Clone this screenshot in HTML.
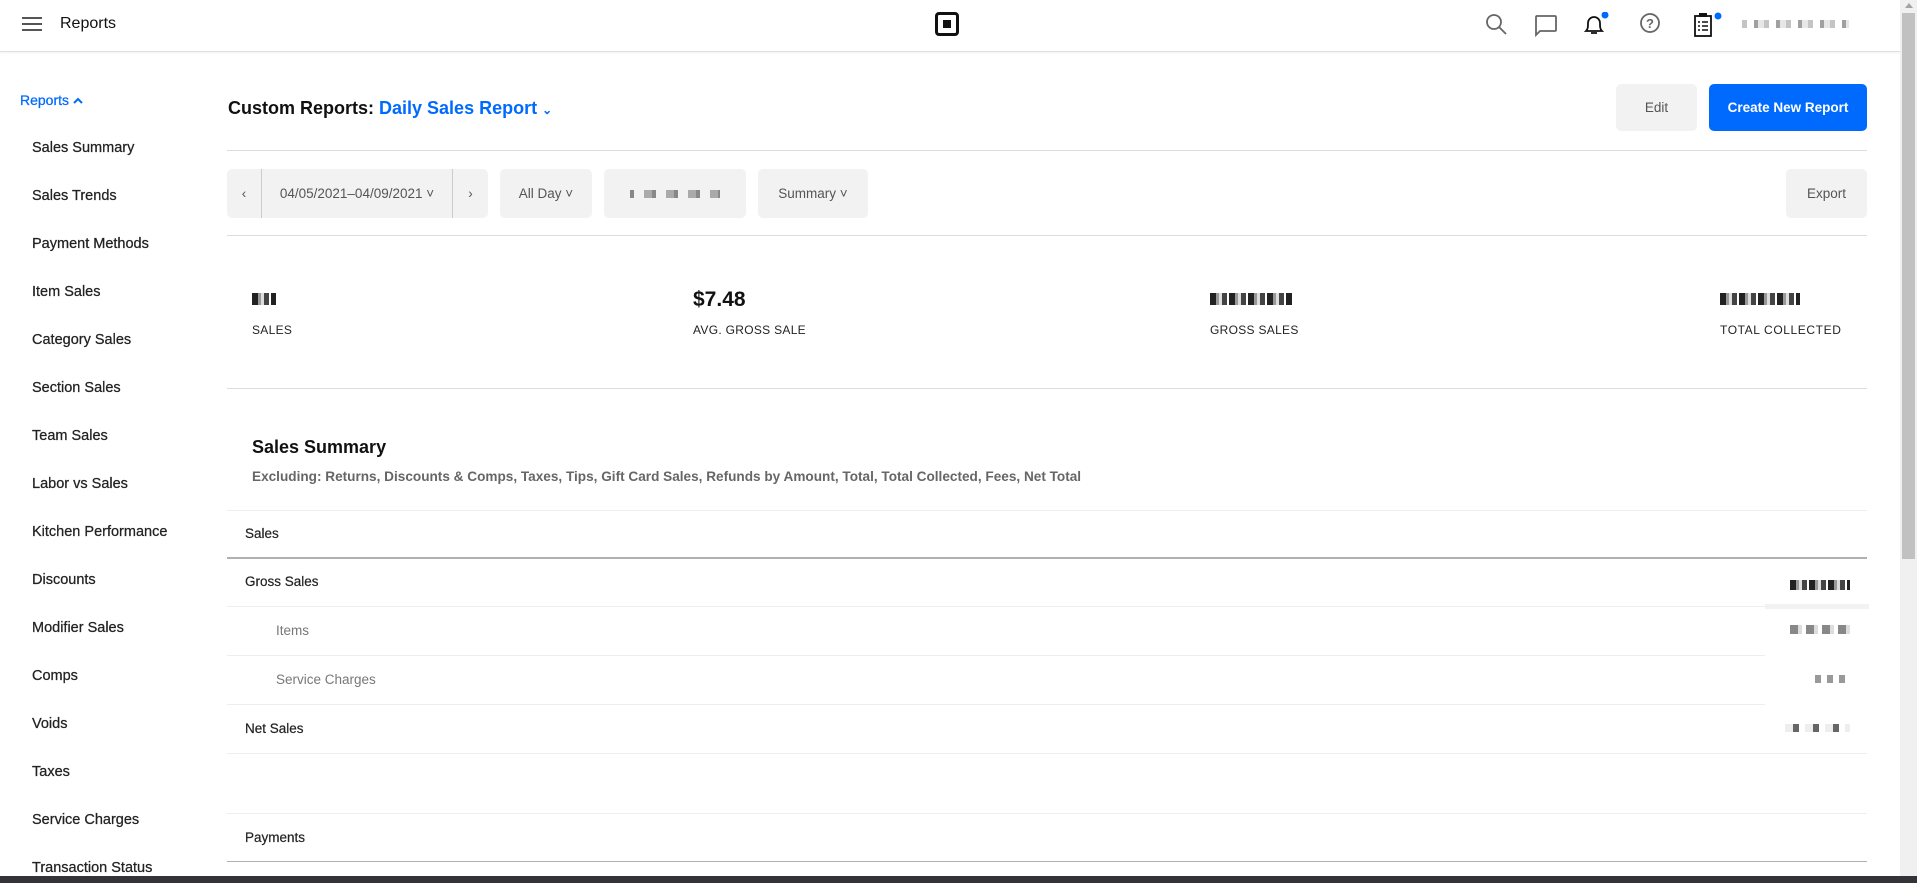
<!DOCTYPE html>
<html><head><meta charset="utf-8"><style>
*{box-sizing:border-box;margin:0;padding:0}
body{width:1917px;height:883px;overflow:hidden;background:#fff;font-family:"Liberation Sans",sans-serif;color:#1a1a1a;position:relative}
.abs{position:absolute}
.hdr{left:0;top:0;width:1900px;height:52px;border-bottom:1px solid #e0e0e0;box-shadow:0 1px 2px rgba(0,0,0,.06)}
.side{left:32px;font-size:14.5px;color:#222;-webkit-text-stroke:.25px #222}
.line{position:absolute;height:1px;background:#dcdcdc}
.btn{position:absolute;background:#f2f2f2;border-radius:5px;font-size:13.5px;color:#555;display:flex;align-items:center;justify-content:center}
.stv{font-size:21px;font-weight:bold;color:#111}
.stl{font-size:12px;color:#222;letter-spacing:.3px}
.blur{display:inline-block;height:12px;background:repeating-linear-gradient(90deg,#222 0 6px,#999 6px 9px,#ddd 9px 12px,#444 12px 17px,#fff 17px 19px)}
.rowt{position:absolute;font-size:13.5px;color:#222;-webkit-text-stroke:.2px #222}
.sub{color:#777;-webkit-text-stroke:0}
</style></head><body>
<div class="abs hdr"></div>
<div class="abs" style="left:22px;top:17px;width:20px;height:2px;background:#555;box-shadow:0 6px 0 #555,0 12px 0 #555"></div>
<div class="abs" style="left:60px;top:15px;font-size:16px;color:#111">Reports</div>
<div class="abs" style="left:935px;top:12px;width:24px;height:24px;border:3px solid #111;border-radius:4px;background:#fff"><div style="position:absolute;left:5px;top:5px;width:8px;height:8px;background:#111"></div></div>
<svg class="abs" style="left:1484px;top:12px" width="240" height="26" viewBox="0 0 240 26" fill="none" stroke-width="1.8">
<circle cx="10" cy="10" r="7" stroke="#666"/><line x1="15" y1="15" x2="22" y2="22" stroke="#666"/>
<path d="M52 4h19a1 1 0 0 1 1 1v13a1 1 0 0 1-1 1H56l-4 4V5a1 1 0 0 1 1-1z" stroke="#666"/>
<path d="M102 19c2-2 2-4 2-8a6 6 0 0 1 12 0c0 4 0 6 2 8zM107 21h6" stroke="#111"/>
<circle cx="121" cy="3" r="3.5" fill="#006aff" stroke="none"/>
<circle cx="166" cy="11" r="9" stroke="#666"/><text x="166" y="16" font-size="13" text-anchor="middle" fill="#666" stroke="none" font-family="Liberation Sans" font-weight="bold">?</text>
<rect x="211" y="4" width="16" height="20" stroke="#111"/><rect x="215" y="1" width="8" height="4" fill="#111" stroke="none"/>
<path d="M214 10h2M214 14h2M214 18h2M218 10h6M218 14h6M218 18h6" stroke="#111" stroke-width="1.6"/>
<circle cx="234" cy="4" r="3.5" fill="#006aff" stroke="none"/>
</svg>
<div class="abs" style="left:1742px;top:20px;width:107px;height:8px;background:repeating-linear-gradient(90deg,#aaa 0 5px,#fff 5px 12px,#777 12px 16px,#ddd 16px 22px);opacity:.7"></div>

<div class="abs" style="left:20px;top:92px;font-size:14px;color:#006aff;-webkit-text-stroke:.25px #006aff">Reports <svg width="10" height="8" viewBox="0 0 10 8"><path d="M1 6l4-4 4 4" stroke="#006aff" stroke-width="2" fill="none"/></svg></div>
<div class="abs side" style="top:140px">Sales Summary</div>
<div class="abs side" style="top:188px">Sales Trends</div>
<div class="abs side" style="top:236px">Payment Methods</div>
<div class="abs side" style="top:284px">Item Sales</div>
<div class="abs side" style="top:332px">Category Sales</div>
<div class="abs side" style="top:380px">Section Sales</div>
<div class="abs side" style="top:428px">Team Sales</div>
<div class="abs side" style="top:476px">Labor vs Sales</div>
<div class="abs side" style="top:524px">Kitchen Performance</div>
<div class="abs side" style="top:572px">Discounts</div>
<div class="abs side" style="top:620px">Modifier Sales</div>
<div class="abs side" style="top:668px">Comps</div>
<div class="abs side" style="top:716px">Voids</div>
<div class="abs side" style="top:764px">Taxes</div>
<div class="abs side" style="top:812px">Service Charges</div>
<div class="abs side" style="top:860px">Transaction Status</div>

<div class="abs" style="left:228px;top:98px;font-size:18px;font-weight:bold;color:#111">Custom Reports: <span style="color:#006aff">Daily Sales Report</span> <span style="color:#006aff;font-size:12px">&#8964;</span></div>
<div class="btn" style="left:1616px;top:84px;width:81px;height:47px">Edit</div>
<div class="btn" style="left:1709px;top:84px;width:158px;height:47px;background:#006aff;color:#fff;font-weight:bold">Create New Report</div>
<div class="line" style="left:227px;top:150px;width:1640px"></div>

<div class="btn" style="left:227px;top:169px;width:261px;height:49px;justify-content:flex-start">
<span style="width:35px;text-align:center;border-right:1px solid #ccc;height:49px;line-height:49px">&#8249;</span>
<span style="width:191px;text-align:center;border-right:1px solid #ccc;height:49px;line-height:49px">04/05/2021–04/09/2021 ˅</span>
<span style="width:35px;text-align:center">&#8250;</span></div>
<div class="btn" style="left:500px;top:169px;width:92px;height:49px">All Day ˅</div>
<div class="btn" style="left:604px;top:169px;width:142px;height:49px"><span style="width:90px;height:8px;background:repeating-linear-gradient(90deg,#888 0 4px,#f2f2f2 4px 14px,#aaa 14px 22px)"></span></div>
<div class="btn" style="left:758px;top:169px;width:110px;height:49px">Summary ˅</div>
<div class="btn" style="left:1786px;top:169px;width:81px;height:49px">Export</div>
<div class="line" style="left:227px;top:235px;width:1640px"></div>

<div class="abs" style="left:252px;top:292px"><span class="blur" style="width:24px"></span></div>
<div class="abs stl" style="left:252px;top:323px">SALES</div>
<div class="abs stv" style="left:693px;top:288px">$7.48</div>
<div class="abs stl" style="left:693px;top:323px">AVG. GROSS SALE</div>
<div class="abs" style="left:1210px;top:292px"><span class="blur" style="width:82px"></span></div>
<div class="abs stl" style="left:1210px;top:323px">GROSS SALES</div>
<div class="abs" style="left:1720px;top:292px"><span class="blur" style="width:80px"></span></div>
<div class="abs stl" style="left:1720px;top:323px;letter-spacing:.6px">TOTAL COLLECTED</div>
<div class="line" style="left:227px;top:388px;width:1640px"></div>

<div class="abs" style="left:252px;top:437px;font-size:18px;font-weight:bold;color:#111">Sales Summary</div>
<div class="abs" style="left:252px;top:469px;font-size:13.6px;color:#666;font-weight:bold">Excluding: Returns, Discounts &amp; Comps, Taxes, Tips, Gift Card Sales, Refunds by Amount, Total, Total Collected, Fees, Net Total</div>
<div class="line" style="left:227px;top:510px;width:1640px;background:#eee"></div>
<div class="rowt" style="left:245px;top:526px">Sales</div>
<div class="line" style="left:227px;top:557px;width:1640px;height:2px;background:#b0b0b0"></div>
<div class="rowt" style="left:245px;top:574px">Gross Sales</div>
<div class="abs" style="left:1790px;top:577px"><span class="blur" style="width:60px;height:10px"></span></div>
<div class="line" style="left:227px;top:606px;width:1538px;background:#eee"></div>
<div class="abs" style="left:1765px;top:604px;width:104px;height:5px;background:#f2f2f2"></div>
<div class="rowt sub" style="left:276px;top:623px">Items</div>
<div class="abs" style="left:1790px;top:625px;width:60px;height:9px;background:repeating-linear-gradient(90deg,#888 0 8px,#ddd 8px 12px,#fff 12px 16px)"></div>
<div class="line" style="left:227px;top:655px;width:1538px;background:#eee"></div>
<div class="rowt sub" style="left:276px;top:672px">Service Charges</div>
<div class="abs" style="left:1815px;top:675px;width:35px;height:8px;background:repeating-linear-gradient(90deg,#999 0 6px,#fff 6px 12px)"></div>
<div class="line" style="left:227px;top:704px;width:1538px;background:#eee"></div>
<div class="rowt" style="left:245px;top:721px">Net Sales</div>
<div class="abs" style="left:1785px;top:724px;width:65px;height:8px;background:repeating-linear-gradient(90deg,#eee 0 8px,#666 8px 14px,#fff 14px 20px)"></div>
<div class="line" style="left:227px;top:753px;width:1640px;background:#eee"></div>
<div class="line" style="left:227px;top:813px;width:1640px;background:#eee"></div>
<div class="rowt" style="left:245px;top:830px">Payments</div>
<div class="line" style="left:227px;top:861px;width:1640px;background:#b0b0b0"></div>

<div class="abs" style="left:1900px;top:0;width:17px;height:876px;background:#f0f0f0"></div>
<div class="abs" style="left:1902px;top:13px;width:13px;height:546px;background:#c1c1c1"></div>
<div class="abs" style="left:1905px;top:3px;width:0;height:0;border-left:4px solid transparent;border-right:4px solid transparent;border-bottom:5px solid #a3a3a3"></div>
<div class="abs" style="left:0;top:876px;width:1917px;height:7px;background:#333438"></div>
</body></html>
